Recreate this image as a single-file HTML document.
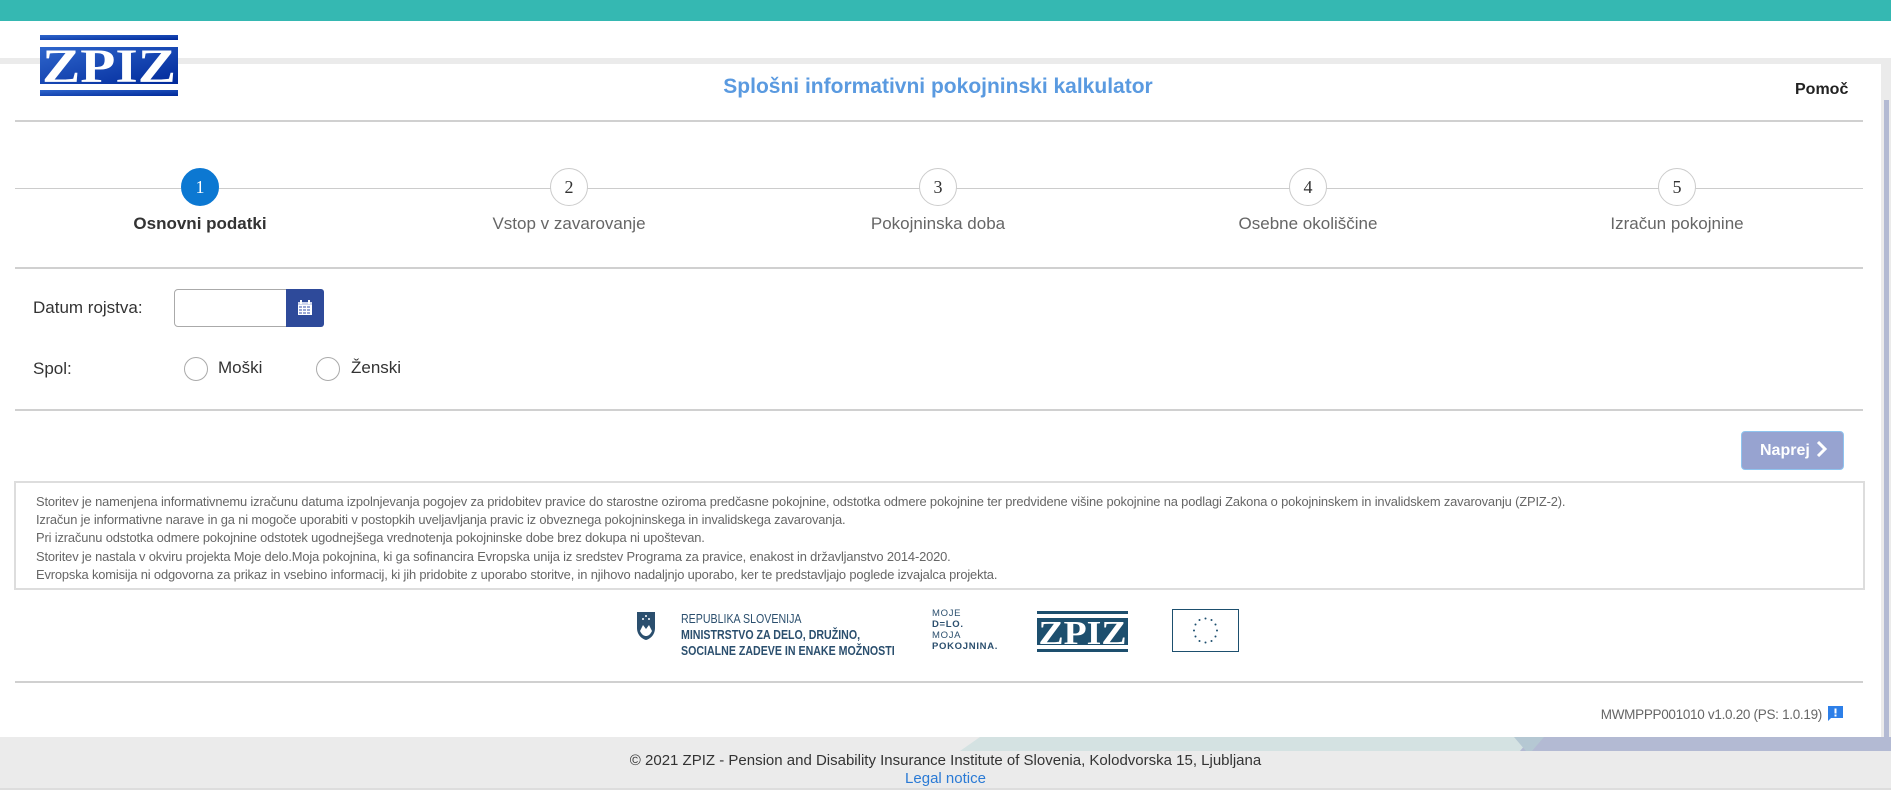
<!DOCTYPE html>
<html><head><meta charset="utf-8">
<style>
*{box-sizing:border-box;margin:0;padding:0}
html,body{width:1891px;height:796px;overflow:hidden;background:#fff;font-family:"Liberation Sans",sans-serif;color:#333}
.abs{position:absolute}
.line{position:absolute;left:15px;width:1848px;height:2px;background:#d0d0d0}
.stepc{position:absolute;width:38px;height:38px;border-radius:50%;border:1px solid #ccc;background:#fff;text-align:center;line-height:36px;font-size:18px;color:#333;font-family:"Liberation Serif",serif}
.stepl{position:absolute;width:300px;text-align:center;font-size:17px;color:#666;top:214px}
.info{position:absolute;left:14px;top:481px;width:1851px;height:109px;border:2px solid #ddd;padding:10px 0 0 20px;font-size:12.9px;color:#666;line-height:18.2px;letter-spacing:-0.15px}
.radio{position:absolute;width:24px;height:24px;border-radius:50%;border:1px solid #aaa;background:#fff}
</style></head><body>
<div class="abs" style="left:0;top:0;width:1891px;height:21px;background:#35b8b2"></div>
<div class="abs" style="left:0;top:58px;width:1891px;height:6px;background:#ebebeb"></div>
<div class="abs" style="left:1881px;top:58px;width:10px;height:50px;background:#ebebeb"></div>
<div class="abs" style="left:1881px;top:100px;width:10px;height:650px;background:#ebebeb"></div>
<div class="abs" style="left:1884px;top:100px;width:5px;height:650px;background:#b3bad3"></div>
<!-- bottom strip -->
<div class="abs" style="left:0;top:737px;width:1891px;height:14px;background:#ebebeb"></div>
<div class="abs" style="left:960px;top:737px;width:600px;height:14px;background:#d4e2e2;clip-path:polygon(20px 0,100% 0,100% 100%,0 100%)"></div>
<div class="abs" style="left:1520px;top:737px;width:371px;height:14px;background:#b3bad3;clip-path:polygon(12px 0,100% 0,100% 100%,0 100%)"></div>
<div class="abs" style="left:1514px;top:737px;width:30px;height:14px;background:#b5c8d3;clip-path:polygon(0 0,100% 0,60% 100%,40% 100%)"></div>
<div class="abs" style="left:0;top:751px;width:1891px;height:39px;background:#ebebeb;border-bottom:2px solid #ddd"></div>
<div class="abs" style="left:0;top:752px;width:1891px;text-align:center;font-size:15px;color:#333;line-height:18px">© 2021 ZPIZ - Pension and Disability Insurance Institute of Slovenia, Kolodvorska 15, Ljubljana<br><span style="color:#2a7ad5">Legal notice</span></div>

<!-- logo -->
<svg class="abs" style="left:40px;top:35px" width="138" height="61" viewBox="0 0 138 61">
<defs><linearGradient id="g" x1="0" y1="0" x2="1" y2="1"><stop offset="0" stop-color="#2f66cc"/><stop offset="1" stop-color="#00299a"/></linearGradient></defs>
<rect x="0" y="0" width="138" height="5" fill="url(#g)"/>
<rect x="0" y="12" width="138" height="37" fill="url(#g)"/>
<rect x="0" y="55" width="138" height="6" fill="url(#g)"/>
<text x="69" y="47" text-anchor="middle" font-family="Liberation Serif" font-weight="bold" font-size="48" fill="#fff" textLength="134" lengthAdjust="spacingAndGlyphs">ZPIZ</text>
</svg>
<div class="abs" style="left:0;top:75px;width:1876px;text-align:center;font-size:21px;font-weight:bold;color:#5a9ae0">Splošni informativni pokojninski kalkulator</div>
<div class="abs" style="left:1795px;top:81px;font-size:16px;font-weight:bold;color:#222">Pomoč</div>
<div class="line" style="top:120px"></div>

<!-- stepper -->
<div class="abs" style="left:15px;top:188px;width:1848px;height:1px;background:#ccc"></div>
<div class="stepc" style="left:181px;top:168px;background:#0c78d2;border-color:#0c78d2;color:#fff">1</div>
<div class="stepc" style="left:550px;top:168px">2</div>
<div class="stepc" style="left:919px;top:168px">3</div>
<div class="stepc" style="left:1289px;top:168px">4</div>
<div class="stepc" style="left:1658px;top:168px">5</div>
<div class="stepl" style="left:50px;font-weight:bold;color:#333">Osnovni podatki</div>
<div class="stepl" style="left:419px">Vstop v zavarovanje</div>
<div class="stepl" style="left:788px">Pokojninska doba</div>
<div class="stepl" style="left:1158px">Osebne okoliščine</div>
<div class="stepl" style="left:1527px">Izračun pokojnine</div>
<div class="line" style="top:267px"></div>

<!-- form -->
<div class="abs" style="left:33px;top:298px;font-size:17px;color:#333">Datum rojstva:</div>
<div class="abs" style="left:174px;top:289px;width:113px;height:38px;border:1px solid #aaa;border-radius:4px 0 0 4px"></div>
<div class="abs" style="left:286px;top:289px;width:38px;height:38px;background:#2e4a9a;border-radius:0 3px 3px 0">
<svg width="38" height="38" viewBox="0 0 38 38"><rect x="12" y="13" width="14" height="13" fill="#fff"/><rect x="12" y="13" width="14" height="3" fill="#cfd6ee"/><g fill="#9aa8d6"><rect x="13" y="17" width="3" height="2"/><rect x="17" y="17" width="3" height="2"/><rect x="21" y="17" width="3" height="2"/><rect x="13" y="20" width="3" height="2"/><rect x="17" y="20" width="3" height="2"/><rect x="21" y="20" width="3" height="2"/><rect x="13" y="23" width="3" height="2"/><rect x="17" y="23" width="3" height="2"/><rect x="21" y="23" width="3" height="2"/></g><rect x="14" y="11" width="2" height="4" fill="#fff"/><rect x="22" y="11" width="2" height="4" fill="#fff"/></svg>
</div>
<div class="abs" style="left:33px;top:359px;font-size:17px;color:#333">Spol:</div>
<div class="radio" style="left:184px;top:357px"></div>
<div class="abs" style="left:218px;top:358px;font-size:17px;color:#333">Moški</div>
<div class="radio" style="left:316px;top:357px"></div>
<div class="abs" style="left:351px;top:358px;font-size:17px;color:#333">Ženski</div>
<div class="line" style="top:409px"></div>

<div class="abs" style="left:1741px;top:431px;width:103px;height:39px;background:#97a3d0;border:1px solid #8fc4ef;border-radius:4px;color:#fff;font-size:16px;font-weight:bold;line-height:37px;padding-left:18px">Naprej <svg width="12" height="16" viewBox="0 0 12 16" style="vertical-align:-2px;margin-left:2px"><path d="M2 1l7 7-7 7" stroke="#fff" stroke-width="3" fill="none"/></svg></div>

<div class="info">
<div style="white-space:nowrap">Storitev je namenjena informativnemu izračunu datuma izpolnjevanja pogojev za pridobitev pravice do starostne oziroma predčasne pokojnine, odstotka odmere pokojnine ter predvidene višine pokojnine na podlagi Zakona o pokojninskem in invalidskem zavarovanju (ZPIZ-2).<br>Izračun je informativne narave in ga ni mogoče uporabiti v postopkih uveljavljanja pravic iz obveznega pokojninskega in invalidskega zavarovanja.<br>Pri izračunu odstotka odmere pokojnine odstotek ugodnejšega vrednotenja pokojninske dobe brez dokupa ni upoštevan.<br>Storitev je nastala v okviru projekta Moje delo.Moja pokojnina, ki ga sofinancira Evropska unija iz sredstev Programa za pravice, enakost in državljanstvo 2014-2020.<br>Evropska komisija ni odgovorna za prikaz in vsebino informacij, ki jih pridobite z uporabo storitve, in njihovo nadaljnjo uporabo, ker te predstavljajo poglede izvajalca projekta.</div>
</div>

<!-- partner logos -->
<svg class="abs" style="left:636px;top:611px" width="20" height="30" viewBox="0 0 20 30"><path d="M1 1h18v16c0 7-5 11-9 12C6 28 1 24 1 17z" fill="#2b4f6e"/><path d="M4 20l3-6 3 4 3-4 3 6c-2 4-4 5-6 5s-4-1-6-5z" fill="#fff"/><circle cx="10" cy="5" r="1" fill="#fff"/><circle cx="7" cy="8" r="1" fill="#fff"/><circle cx="13" cy="8" r="1" fill="#fff"/></svg>
<div class="abs" style="left:681px;top:611px;font-size:12.5px;line-height:16px;color:#2b4f6e;transform:scaleX(0.85);transform-origin:0 0;white-space:nowrap">REPUBLIKA SLOVENIJA<br><b>MINISTRSTVO ZA DELO, DRUŽINO,</b><br><b>SOCIALNE ZADEVE IN ENAKE MOŽNOSTI</b></div>
<div class="abs" style="left:932px;top:608px;font-size:9.5px;line-height:11px;color:#2b4f6e;letter-spacing:0.7px">MOJE<br><b>D=LO.</b><br>MOJA<br><b>POKOJNINA.</b></div>
<svg class="abs" style="left:1037px;top:611px" width="91" height="41" viewBox="0 0 91 41"><rect width="91" height="3" fill="#1d4f6e"/><rect y="7" width="91" height="27" fill="#1d4f6e"/><rect y="38" width="91" height="3" fill="#1d4f6e"/><text x="45.5" y="33" text-anchor="middle" font-family="Liberation Serif" font-weight="bold" font-size="34" fill="#fff" textLength="88" lengthAdjust="spacingAndGlyphs">ZPIZ</text></svg>
<svg class="abs" style="left:1172px;top:609px" width="67" height="43" viewBox="0 0 67 43"><rect x="0.5" y="0.5" width="66" height="42" fill="#fff" stroke="#1d4f6e"/><g fill="#1d4f6e"><circle cx="33.5" cy="9.5" r="1"/><circle cx="39.5" cy="11" r="1"/><circle cx="43.5" cy="15.5" r="1"/><circle cx="45" cy="21.5" r="1"/><circle cx="43.5" cy="27.5" r="1"/><circle cx="39.5" cy="32" r="1"/><circle cx="33.5" cy="33.5" r="1"/><circle cx="27.5" cy="32" r="1"/><circle cx="23.5" cy="27.5" r="1"/><circle cx="22" cy="21.5" r="1"/><circle cx="23.5" cy="15.5" r="1"/><circle cx="27.5" cy="11" r="1"/></g></svg>
<div class="line" style="top:681px"></div>

<div class="abs" style="left:1500px;top:707px;width:322px;text-align:right;font-size:13.5px;color:#666;letter-spacing:-0.3px">MWMPPP001010 v1.0.20 (PS: 1.0.19)</div>
<svg class="abs" style="left:1827px;top:705px" width="17" height="17" viewBox="0 0 17 17"><path d="M1 1h15v12H4l-3 3z" fill="#2d7fe8"/><rect x="7.5" y="3.5" width="2" height="5" fill="#fff"/><rect x="7.5" y="9.5" width="2" height="2" fill="#fff"/></svg>
</body></html>
